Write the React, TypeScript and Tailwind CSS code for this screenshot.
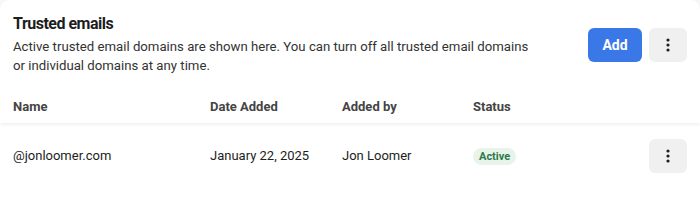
import React from 'react';

const KebabIcon = () => (
  <svg width="4" height="14" viewBox="0 0 4 14" fill="#1c1e21">
    <circle cx="2" cy="2" r="1.6" />
    <circle cx="2" cy="7" r="1.6" />
    <circle cx="2" cy="12" r="1.6" />
  </svg>
);

const KebabButton = () => (
  <button className="flex h-[34px] w-[38px] items-center justify-center rounded-md bg-[#f0f0f0]">
    <KebabIcon />
  </button>
);

const rows = [
  { name: '@jonloomer.com', date: 'January 22, 2025', by: 'Jon Loomer', status: 'Active' },
];

export default function App() {
  return (
    <div className="h-[212px] w-[700px] bg-[#f7f7f7]">
      <div className="h-full w-full overflow-hidden rounded-t-[10px] bg-white font-['Roboto',sans-serif] text-[#1c1e21]">
        {/* Header */}
        <div className="flex items-start justify-between px-[13px] pt-[13px]">
          <div>
            <h2 className="text-[16px] font-bold leading-[22px] tracking-[-0.5px] text-[#1c1e21]">Trusted emails</h2>
            <p className="mt-[2px] w-[530px] text-[13.2px] leading-[19px] text-[#333]">
              Active trusted email domains are shown here. You can turn off all trusted email domains or individual domains at any time.
            </p>
          </div>
          <div className="mt-[15px] flex gap-[7px]">
            <button className="h-[34px] w-[54px] rounded-md bg-[#3a78e8] text-[14px] font-bold text-white">Add</button>
            <KebabButton />
          </div>
        </div>

        {/* Table header */}
        <div className="mt-[24px] grid grid-cols-[197px_132px_131px_1fr] pl-[13px] pb-[8px] text-[13px] font-bold leading-[16px] text-[#444] shadow-[0_2px_3px_rgba(0,0,0,0.06)]">
          <div>Name</div>
          <div>Date Added</div>
          <div>Added by</div>
          <div>Status</div>
        </div>

        {/* Rows */}
        {rows.map((r) => (
          <div key={r.name} className="mt-[16px] grid grid-cols-[197px_132px_131px_1fr_auto] items-center px-[13px] text-[13px] text-[#1c1e21]">
            <div>{r.name}</div>
            <div>{r.date}</div>
            <div>{r.by}</div>
            <div>
              <span className="inline-block rounded-full bg-[#e8f3ea] px-[6px] py-[1px] text-[11px] font-bold leading-[15px] text-[#2c7a4b]">
                {r.status}
              </span>
            </div>
            <KebabButton />
          </div>
        ))}
      </div>
    </div>
  );
}
